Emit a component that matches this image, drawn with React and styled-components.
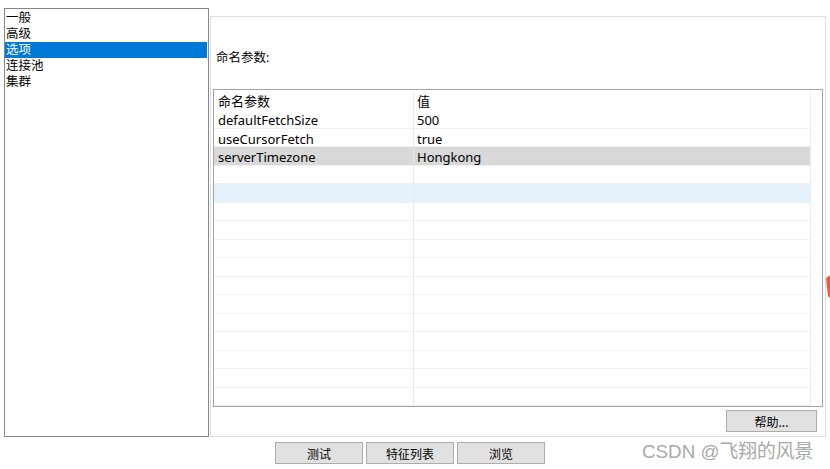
import React from "react";
import styled, { createGlobalStyle } from "styled-components";

const GlobalStyle = createGlobalStyle`
  html, body {
    margin: 0;
    padding: 0;
    background: #fff;
  }
  body {
    font-family: "Noto Sans", "Noto Sans CJK SC", sans-serif;
    font-size: 12.5px;
    color: #000;
  }
`;

const Page = styled.div`
  position: relative;
  width: 830px;
  height: 469px;
  overflow: hidden;
  display: grid;
  grid-template-columns: 205px 616px;
  grid-template-rows: 429px auto;
  column-gap: 1px;
  padding: 8px 0 0 4px;
  box-sizing: border-box;
`;

const NavList = styled.ul`
  list-style: none;
  margin: 0;
  padding: 1px 0 0;
  border: 1px solid #828790;
  box-sizing: border-box;
  grid-row: 1 / 2;
`;

const NavItem = styled.li`
  height: 16px;
  line-height: 16px;
  padding-left: 1px;
  margin: 0 1px 0 0;
  font-size: 12.5px;
  background: ${(p) => (p.$active ? "#0078d7" : "transparent")};
  color: ${(p) => (p.$active ? "#fff" : "#000")};
`;

const Panel = styled.section`
  margin-top: 8px;
  height: 421px;
  border: 1px solid #dcdcdc;
  box-sizing: border-box;
  display: flex;
  flex-direction: column;
  padding: 0 2px 0 2px;
`;

const Label = styled.div`
  height: 72px;
  line-height: 1;
  padding: 35px 0 0 3px;
  box-sizing: border-box;
`;

const Table = styled.div`
  height: 318px;
  border: 1px solid #a3a3a3;
  box-sizing: border-box;
  display: flex;
  overflow: hidden;
`;

const Rows = styled.div`
  flex: 1;
  display: flex;
  flex-direction: column;
  border-right: 1px solid #e6edf5;
`;

const Row = styled.div`
  display: grid;
  grid-template-columns: 199px 1fr;
  height: ${(p) => (p.$head ? "20px" : "18.5px")};
  flex: none;
  box-sizing: border-box;
  border-bottom: 1px solid ${(p) => (p.$head ? "transparent" : "#f0f0f0")};
  background: ${(p) =>
    p.$selected ? "#d9d9d9" : p.$hover ? "#e5f1fb" : "transparent"};
`;

const Cell = styled.div`
  padding-top: 1px;
  line-height: ${(p) => (p.$head ? "20px" : "18px")};
  font-size: 13px;
  white-space: nowrap;
  border-left: ${(p) => (p.$second ? "1px solid #e3ebf5" : "none")};
  padding-left: ${(p) => (p.$second ? "3px" : "4px")};
`;

const Gutter = styled.div`
  width: 11px;
  flex: none;
`;

const HelpBar = styled.div`
  display: flex;
  justify-content: flex-end;
  padding: 3px 6px 0 0;
`;

const Button = styled.button`
  width: ${(p) => p.$w || 88}px;
  height: 22px;
  margin: 0;
  padding: 0;
  background: #e1e1e1;
  border: 1px solid #adadad;
  font-family: "Noto Sans CJK SC", "Noto Sans", sans-serif;
  font-size: 12px;
  color: #000;
`;

const ButtonBar = styled.div`
  grid-column: 2 / 3;
  display: flex;
  gap: 3px;
  padding: 5px 0 0 65px;
`;

const Watermark = styled.div`
  position: absolute;
  left: 642px;
  top: 436px;
  font-family: "Liberation Sans", "Noto Sans CJK SC", sans-serif;
  font-size: 18.8px;
  color: #a9a9a9;
  white-space: nowrap;
`;

const Badge = styled.svg`
  position: absolute;
  left: 822px;
  top: 272px;
`;

const navItems = ["一般", "高级", "选项", "连接池", "集群"];

const params = [
  ["defaultFetchSize", "500"],
  ["useCursorFetch", "true"],
  ["serverTimezone", "Hongkong"],
];

export default function App() {
  const empty = Array.from({ length: 13 }, (_, i) => i);
  return (
    <>
      <GlobalStyle />
      <Page>
        <NavList>
          {navItems.map((n) => (
            <NavItem key={n} $active={n === "选项"}>
              {n}
            </NavItem>
          ))}
        </NavList>
        <Panel>
          <Label>命名参数:</Label>
          <Table>
            <Rows>
              <Row $head>
                <Cell $head>命名参数</Cell>
                <Cell $head $second>值</Cell>
              </Row>
              {params.map(([k, v], i) => (
                <Row key={k} $selected={i === 2}>
                  <Cell>{k}</Cell>
                  <Cell $second>{v}</Cell>
                </Row>
              ))}
              {empty.map((i) => (
                <Row key={i} $hover={i === 1}>
                  <Cell />
                  <Cell $second />
                </Row>
              ))}
            </Rows>
            <Gutter />
          </Table>
          <HelpBar>
            <Button $w={91}>帮助...</Button>
          </HelpBar>
        </Panel>
        <ButtonBar>
          <Button>测试</Button>
          <Button>特征列表</Button>
          <Button>浏览</Button>
        </ButtonBar>
        <Watermark>CSDN @飞翔的风景</Watermark>
        <Badge width="10" height="30" viewBox="0 0 10 30">
          <path d="M4 6 L10 2 L10 28 L6 24 Z" fill="#fc5531" />
        </Badge>
      </Page>
    </>
  );
}
